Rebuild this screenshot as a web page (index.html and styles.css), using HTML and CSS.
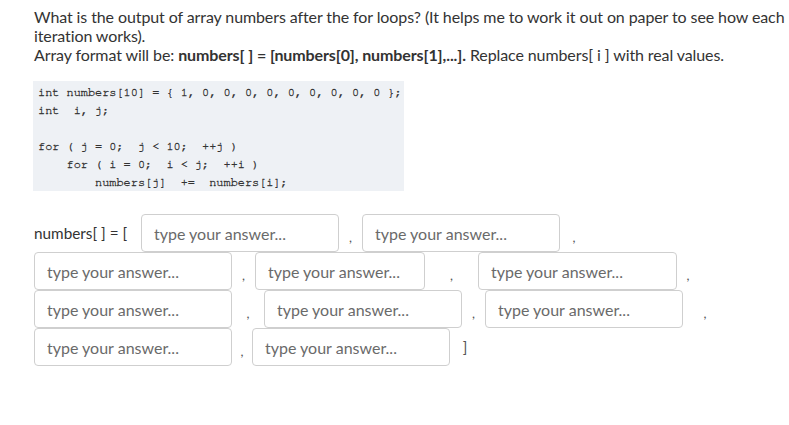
FILE: index.html
```html
<!DOCTYPE html>
<html>
<head>
<meta charset="utf-8">
<link rel="stylesheet" href="styles.css">
</head>
<body>
<div class="page">
  <p class="question">What is the output of array numbers after the for loops? (It helps me to work it out on paper to see how each iteration works).<br>Array format will be: <b>numbers[ ] = [numbers[0], numbers[1],...].</b> Replace numbers[ i ] with real values.</p>
  <pre class="code">int numbers[10] = { 1, 0, 0, 0, 0, 0, 0, 0, 0, 0 };
int  i, j;

for ( j = 0;  j &lt; 10;  ++j )
    for ( i = 0;  i &lt; j;  ++i )
        numbers[j]  +=  numbers[i];</pre>
  <div class="answers">
    <div class="row r1">
      <span class="label">numbers[ ] = [</span>
      <input class="box w198 ml13" placeholder="type your answer...">
      <span class="sep s1">,</span>
      <input class="box w198" placeholder="type your answer...">
      <span class="sep s2">,</span>
    </div>
    <div class="row r2">
      <input class="box w198" placeholder="type your answer...">
      <span class="sep s3">,</span>
      <input class="box w170" placeholder="type your answer...">
      <span class="sep s4">,</span>
      <input class="box w199" placeholder="type your answer...">
      <span class="sep s5">,</span>
    </div>
    <div class="row r3">
      <input class="box w198" placeholder="type your answer...">
      <span class="sep s6">,</span>
      <input class="box w198" placeholder="type your answer...">
      <span class="sep s7">,</span>
      <input class="box w198" placeholder="type your answer...">
      <span class="sep s8">,</span>
    </div>
    <div class="row r4">
      <input class="box w198" placeholder="type your answer...">
      <span class="sep s9">,</span>
      <input class="box w198" placeholder="type your answer...">
      <span class="sep s10">]</span>
    </div>
  </div>
</div>
</body>
</html>
```
FILE: styles.css
```css
html, body {
  margin: 0;
  padding: 0;
  background: #ffffff;
}
.page {
  padding: 7px 0 0 34px;
  font-family: Lato, "Open Sans", sans-serif;
  color: #333333;
}
.question {
  margin: 0;
  font-size: 16px;
  line-height: 19px;
  width: 752px;
  letter-spacing: -0.1px;
}
.question b {
  font-weight: 700;
}
.code {
  margin: 17px 0 0 -1px;
  width: 366px;
  height: 104px;
  padding: 2px 0 4px 5px;
  background: #eef1f5;
  font-family: "Nimbus Mono PS", "FreeMono", "Courier New", "Liberation Mono", monospace;
  font-size: 11.9px;
  line-height: 18px;
  color: #222222;
  -webkit-text-stroke: 0.3px #333333;
  white-space: pre;
  overflow: hidden;
}
.answers {
  margin-top: 23px;
  display: flex;
  flex-direction: column;
}
.row {
  display: flex;
  align-items: center;
  height: 38px;
}
.label {
  font-size: 15.3px;
  color: #333;
  width: 94px;
}
.box {
  box-sizing: border-box;
  height: 38px;
  border: 1px solid #cfcfcf;
  border-radius: 4px;
  padding: 0 12px;
  font-family: Lato, "Open Sans", sans-serif;
  font-size: 16px;
  color: #333;
  background: #fff;
  outline: none;
}
.box::placeholder {
  color: #6a6a6a;
  opacity: 1;
}
.w198 { width: 198px; }
.w170 { width: 170px; }
.w199 { width: 199px; }
.ml13 { margin-left: 13px; }
.sep {
  font-size: 13px;
  color: #555;
  text-align: center;
  padding-top: 8px;
}
.s1 { width: 23px; }
.s2 { width: 28px; }
.s3 { width: 23px; }
.s4 { width: 53px; }
.s5 { width: 22px; }
.s6 { width: 32px; }
.s7 { width: 23px; }
.s8 { width: 44px; }
.s9 { width: 20px; }
.s10 { width: 30px; font-size: 15px; padding-top: 0; }
```
